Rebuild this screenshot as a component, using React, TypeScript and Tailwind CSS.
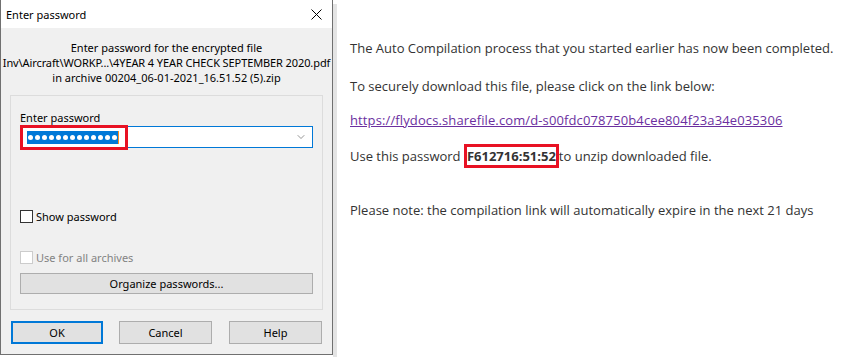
import { ChevronDown } from "lucide-react";

const dialogFont = { fontFamily: '"Noto Sans", "Liberation Sans", sans-serif' };

function WinButton({
  label,
  primary,
  className = "",
}: {
  label: string;
  primary?: boolean;
  className?: string;
}) {
  return (
    <div
      className={
        "flex h-[23px] items-center justify-center bg-[#e1e1e1] text-[11px] text-black " +
        (primary ? "border-2 border-[#0078d7] " : "border border-[#adadad] ") +
        className
      }
    >
      {label}
    </div>
  );
}

function Checkbox({ label, disabled }: { label: string; disabled?: boolean }) {
  return (
    <div className="flex items-center gap-[3px]">
      <div
        className={
          "h-[13px] w-[13px] bg-white border " +
          (disabled ? "border-[#cccccc]" : "border-[#333333]")
        }
      />
      <span className={"text-[11px] " + (disabled ? "text-[#838383]" : "text-black")}>
        {label}
      </span>
    </div>
  );
}

function PasswordDialog() {
  return (
    <div className="flex h-[357px] w-[337px] shrink-0">
      <div
        className="flex h-[355px] w-[333px] flex-col border-x border-b border-[#707070] bg-[#f0f0f0] leading-[15px]"
        style={dialogFont}
      >
        {/* title bar */}
        <div className="flex h-[28px] shrink-0 items-center justify-between bg-white pl-[5px] pr-[10px]">
          <span className="text-[11px] text-black">Enter password</span>
          <svg width="11" height="11" viewBox="0 0 11 11" className="text-black">
            <path d="M0.5 0.5 L10.5 10.5 M10.5 0.5 L0.5 10.5" stroke="currentColor" strokeWidth="1" />
          </svg>
        </div>

        <div className="pt-[12px] text-center text-[11px] text-black">
          <div>Enter password for the encrypted file</div>
          <div className="whitespace-nowrap tracking-[-0.1px]">
            Inv\Aircraft\WORKP...\4YEAR 4 YEAR CHECK SEPTEMBER 2020.pdf
          </div>
          <div>in archive 00204_06-01-2021_16.51.52 (5).zip</div>
        </div>

        {/* group box */}
        <div className="mx-[9px] mt-[10px] flex h-[215px] shrink-0 flex-col border border-[#dcdcdc] px-[9px] pt-[14px]">
          <div className="text-[11px] text-black">Enter password</div>
          <div className="relative mt-[1px] flex h-[22px] shrink-0 items-center border border-[#0078d7] bg-white pl-[6px] pr-[5px]">
            <div className="flex h-[13px] items-center gap-[2px] bg-[#0078d7] px-[1px]">
              {Array.from({ length: 13 }).map((_, i) => (
                <span key={i} className="h-[5px] w-[5px] rounded-full bg-white" />
              ))}
            </div>
            <div className="h-[13px] w-[1px] bg-[#ff8c1a]" />
            <div className="flex-1" />
            <ChevronDown size={12} strokeWidth={1.25} className="text-[#555555]" />
            <div className="absolute left-[-1px] top-[-2px] h-[25px] w-[108px] border-[3px] border-[#e81123]" />
          </div>

          <div className="mt-[61px]">
            <Checkbox label="Show password" />
          </div>
          <div className="mt-[26px]">
            <Checkbox label="Use for all archives" disabled />
          </div>
          <WinButton label="Organize passwords..." className="mt-[8px] !h-[21px]" />
        </div>

        <div className="mt-[11px] flex px-[10px]">
          <WinButton label="OK" primary className="w-[93px]" />
          <WinButton label="Cancel" className="ml-[16px] w-[94px]" />
          <WinButton label="Help" className="ml-[17px] w-[94px]" />
        </div>
      </div>
      <div className="mt-[4px] h-[353px] w-[4px] bg-[#e4e4e4]" />
    </div>
  );
}

function EmailBody() {
  return (
    <div
      className="flex flex-col pl-[13px] pt-[38px] text-[13px] leading-[20px] text-[#333333]"
      style={{ fontFamily: '"Open Sans", "Noto Sans", sans-serif' }}
    >
      <p className="whitespace-nowrap">
        The Auto Compilation process that you started earlier has now been completed.
      </p>
      <p className="mt-[18px] whitespace-nowrap">
        To securely download this file, please click on the link below:
      </p>
      <p className="mt-[14px] whitespace-nowrap">
        <span className="tracking-[0.12px] text-[#6b2fa0] underline">
          https://flydocs.sharefile.com/d-s00fdc078750b4cee804f23a34e035306
        </span>
      </p>
      <p className="mt-[16px] whitespace-nowrap">
        Use this password{" "}
        <span className="border-[3px] border-[#e81123] font-bold">F612716:51:52</span>
        to unzip downloaded file.
      </p>
      <p className="mt-[34px] whitespace-nowrap">
        Please note: the compilation link will automatically expire in the next 21 days
      </p>
    </div>
  );
}

export default function App() {
  return (
    <div className="flex h-[357px] w-[849px] overflow-hidden bg-white">
      <PasswordDialog />
      <EmailBody />
    </div>
  );
}
